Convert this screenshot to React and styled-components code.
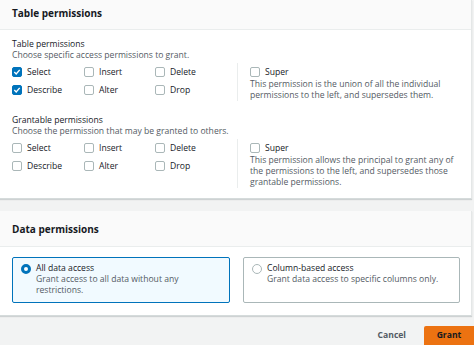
import React from "react";
import styled, { createGlobalStyle } from "styled-components";

const GlobalStyle = createGlobalStyle`
  html, body { margin: 0; padding: 0; background: #f2f3f3; }
  body { font-family: "Open Sans", "Liberation Sans", Arial, sans-serif; color: #16191f; }
  * { box-sizing: border-box; }
`;

const Page = styled.div`
  width: 474px;
  height: 345px;
  overflow: hidden;
  background: #f2f3f3;
`;

const Panel = styled.section`
  width: 472px;
  background: #ffffff;
  border-right: 1px solid #e4e7e7;
  border-bottom: 1px solid #d5dbdb;
  box-shadow: 0 1px 1px rgba(0, 28, 36, 0.15);
`;

const PanelHeader = styled.div`
  height: ${(p) => p.$h}px;
  display: flex;
  align-items: center;
  padding: 0 12px ${(p) => p.$pb || 0}px;
  background: #fafafa;
  border-bottom: 1px solid #eaeded;
`;

const Title = styled.h2`
  margin: 0;
  font-size: 10px;
  font-weight: 700;
  line-height: 14px;
  color: #16191f;
`;

const PanelBody = styled.div`
  padding: ${(p) => p.$pad};
`;

const Group = styled.div`
  margin-top: ${(p) => p.$mt || 0}px;
`;

const Label = styled.div`
  font-size: 8.6px;
  line-height: 11px;
  color: #16191f;
`;

const Desc = styled.div`
  font-size: 8.6px;
  line-height: 11px;
  color: #545b64;
`;

const Row = styled.div`
  display: flex;
  margin-top: 2px;
`;

const CheckGrid = styled.div`
  width: 225px;
  display: grid;
  grid-template-columns: 72px 71px 72px;
  grid-auto-rows: 18px;
  align-content: start;
`;

const Side = styled.div`
  border-left: 1px solid #eaeded;
  padding-left: 12px;
  width: 222px;
`;

const CheckItem = styled.label`
  display: flex;
  align-items: center;
  gap: 5px;
  height: 18px;
  font-size: 8.6px;
  color: #16191f;
`;

const Box = styled.span`
  width: 10px;
  height: 10px;
  border-radius: 2px;
  flex: none;
  display: flex;
  align-items: center;
  justify-content: center;
  border: 1px solid ${(p) => (p.$on ? "#0073bb" : "#aab7b8")};
  background: ${(p) => (p.$on ? "#0073bb" : "#fff")};
`;

const SideDesc = styled(Desc)`
  margin-top: -2px;
`;

const Check = ({ on, children }) => (
  <CheckItem>
    <Box $on={on}>
      {on && (
        <svg width="8" height="8" viewBox="0 0 8 8">
          <path d="M1.3 4.1 L3.2 6 L6.7 1.9" fill="none" stroke="#fff" strokeWidth="1.4" />
        </svg>
      )}
    </Box>
    {children}
  </CheckItem>
);

const GapBand = styled.div`
  height: 12px;
`;

const Cards = styled.div`
  display: grid;
  grid-template-columns: 218px 217px;
  gap: 13px;
`;

const Card = styled.div`
  height: 46px;
  border: 1px solid ${(p) => (p.$on ? "#0073bb" : "#aab7b8")};
  background: ${(p) => (p.$on ? "#f1faff" : "#fff")};
  border-radius: 2px;
  padding: 5px 8px 0;
  display: flex;
  gap: 5px;
`;

const Radio = styled.span`
  width: 10px;
  height: 10px;
  border-radius: 50%;
  flex: none;
  margin-top: 1px;
  background: #fff;
  border: ${(p) => (p.$on ? "3px solid #0073bb" : "1px solid #aab7b8")};
`;

const CardTitle = styled.div`
  font-size: 8.6px;
  line-height: 11px;
  color: #16191f;
`;

const Footer = styled.div`
  display: flex;
  justify-content: flex-end;
  align-items: flex-start;
  gap: 18px;
  padding-top: 10px;
`;

const LinkButton = styled.button`
  border: none;
  background: transparent;
  font-family: inherit;
  font-size: 8.6px;
  font-weight: 700;
  color: #545b64;
  height: 18px;
  padding: 0;
`;

const PrimaryButton = styled.button`
  border: none;
  background: #ec7211;
  font-family: inherit;
  font-size: 8.6px;
  font-weight: 700;
  color: #16191f;
  width: 50px;
  height: 22px;
  padding: 0 0 4px;
  border-radius: 2px 0 0 0;
`;

export default function App() {
  const perms = ["Select", "Insert", "Delete", "Describe", "Alter", "Drop"];
  return (
    <>
      <GlobalStyle />
      <Page>
        <Panel>
          <PanelHeader $h={30} $pb={4}>
            <Title>Table permissions</Title>
          </PanelHeader>
          <PanelBody $pad="9px 12px 10px">
            <Group>
              <Label>Table permissions</Label>
              <Desc>Choose specific access permissions to grant.</Desc>
              <Row>
                <CheckGrid>
                  {perms.map((p) => (
                    <Check key={p} on={p === "Select" || p === "Describe"}>{p}</Check>
                  ))}
                </CheckGrid>
                <Side>
                  <Check>Super</Check>
                  <SideDesc>
                    This permission is the union of all the individual permissions to the left, and supersedes them.
                  </SideDesc>
                </Side>
              </Row>
            </Group>
            <Group $mt={14}>
              <Label>Grantable permissions</Label>
              <Desc>Choose the permission that may be granted to others.</Desc>
              <Row>
                <CheckGrid>
                  {perms.map((p) => (
                    <Check key={p}>{p}</Check>
                  ))}
                </CheckGrid>
                <Side>
                  <Check>Super</Check>
                  <SideDesc>
                    This permission allows the principal to grant any of the permissions to the left, and supersedes those grantable permissions.
                  </SideDesc>
                </Side>
              </Row>
            </Group>
          </PanelBody>
        </Panel>
        <GapBand />
        <Panel>
          <PanelHeader $h={36}>
            <Title>Data permissions</Title>
          </PanelHeader>
          <PanelBody $pad="10px 12px 12px">
            <Cards>
              <Card $on>
                <Radio $on />
                <div>
                  <CardTitle>All data access</CardTitle>
                  <Desc>Grant access to all data without any restrictions.</Desc>
                </div>
              </Card>
              <Card>
                <Radio />
                <div>
                  <CardTitle>Column-based access</CardTitle>
                  <Desc>Grant data access to specific columns only.</Desc>
                </div>
              </Card>
            </Cards>
          </PanelBody>
        </Panel>
        <Footer>
          <LinkButton>Cancel</LinkButton>
          <PrimaryButton>Grant</PrimaryButton>
        </Footer>
      </Page>
    </>
  );
}
